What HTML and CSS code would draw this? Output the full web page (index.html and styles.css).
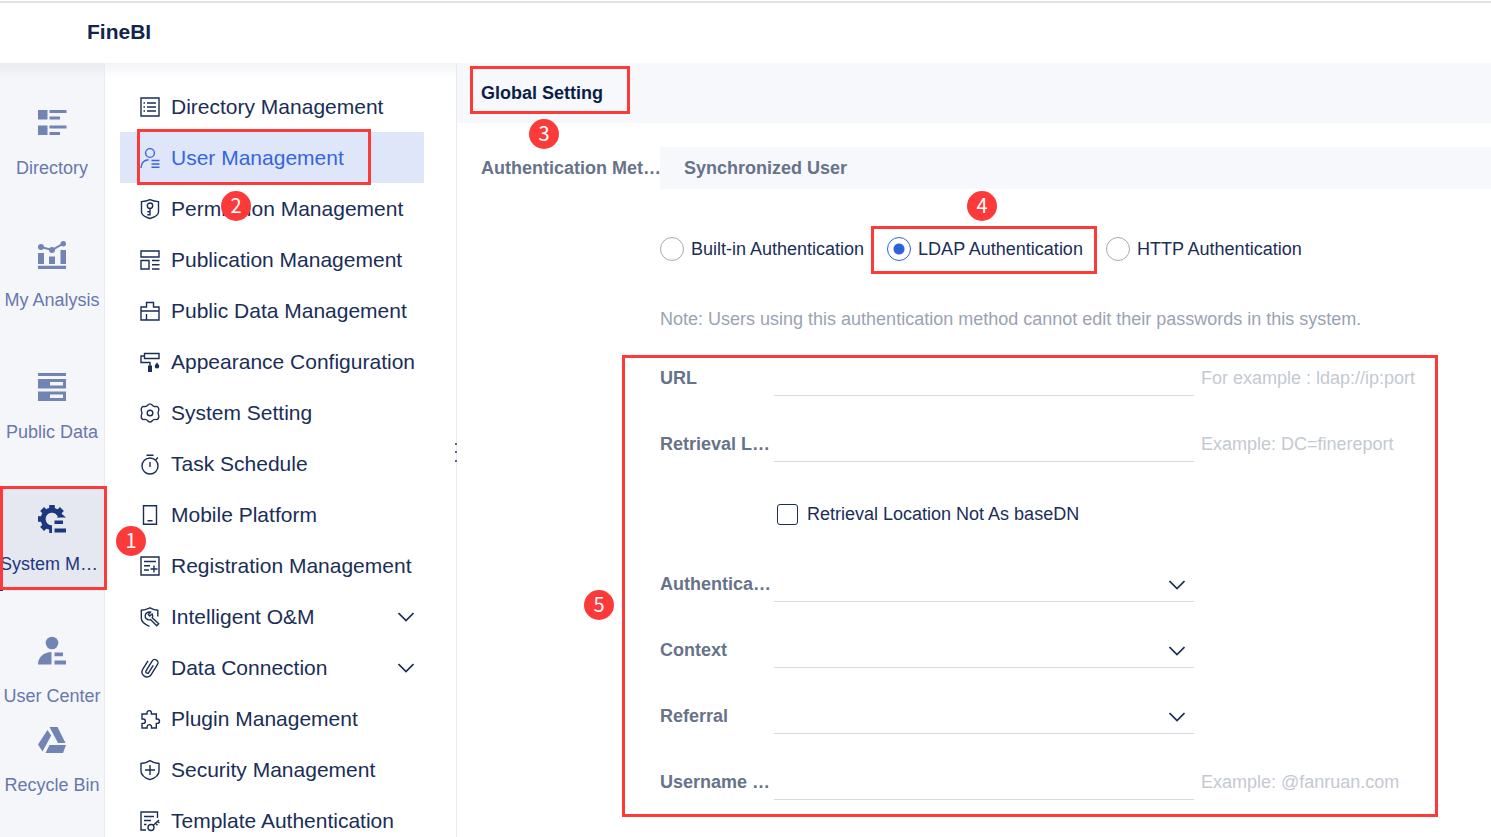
FILE: index.html
```html
<!DOCTYPE html>
<html lang="en">

<head>
    <meta charset="utf-8">
    <meta name="viewport" content="width=device-width, initial-scale=1">
    <title>FineBI</title>
    <link rel="stylesheet" href="styles.css">
</head>

<body>
    <header class="header">
        <h1 class="brand">FineBI</h1>
    </header>

    <div class="shell">
        <nav class="rail">
            <a class="rail-item" href="#">
                <svg class="rail-icon" viewBox="0 0 28 28">
                    <path d="M0 1h9.500v9.500H0zM11.500 1H28.500v3H11.500zM11.500 7.500H22v3H11.500zM0 16.500h9.500V26H0zM11.500 16.500H28.500v3H11.500zM11.500 23H22v3H11.500z" />
                </svg>
                <span class="rail-label">Directory</span>
            </a>
            <a class="rail-item" href="#">
                <svg class="rail-icon" viewBox="0 0 28 28">
                    <path d="M0 12h6v11H0zM11 15.500h6V23h-6zM22.500 9H28v14h-5.500zM0 24.700h28V28H0z" />
                    <circle cx="3" cy="6" r="3" />
                    <circle cx="14" cy="9" r="3" />
                    <circle cx="25.300" cy="2.700" r="2.700" />
                    <path class="stroke" d="M3 6l11 3 11.300-6.300" />
                </svg>
                <span class="rail-label">My Analysis</span>
            </a>
            <a class="rail-item" href="#">
                <svg class="rail-icon" viewBox="0 0 28 28">
                    <path fill-rule="evenodd" d="M0 0h28v3H0zM0 6h28v9.500H0zM12 9v3.500h13V9zM0 18.500h28V28H0zM12 21.500V25h13v-3.500z" />
                </svg>
                <span class="rail-label">Public Data</span>
            </a>
            <a class="rail-item active" href="#">
                <svg class="rail-icon" viewBox="0 0 28 28">
                    <path class="gear" d="M22.500 12A8.800 8.800 0 1 0 14 22.800" />
                    <rect x="11.200" y="0" width="5.600" height="6" />
                    <rect x="11.200" y="0" width="5.600" height="6" transform="rotate(45 14 14)" />
                    <rect x="11.200" y="0" width="5.600" height="6" transform="rotate(-45 14 14)" />
                    <rect x="11.200" y="0" width="5.600" height="6" transform="rotate(-90 14 14)" />
                    <rect x="11.200" y="0" width="5.600" height="6" transform="rotate(-135 14 14)" />
                    <path d="M11.200 22H14v6h-2.800zM18.500 12.500H28L24.500 9.500zM16.500 15.500H25V19h-8.500zM16.500 23.500H28v4H16.500z" />
                </svg>
                <span class="rail-label cut">System M…</span>
                <span class="ring ring-1"></span>
                <span class="badge badge-1">1</span>
            </a>
            <a class="rail-item" href="#">
                <svg class="rail-icon" viewBox="0 0 28 28">
                    <circle cx="14" cy="6" r="6.300" />
                    <path d="M0 27.500C0 20 6 15 13.500 15v12.500zM16.500 15.500H25v3.800h-8.500zM16.500 23.500H28v4H16.500z" />
                </svg>
                <span class="rail-label">User Center</span>
            </a>
            <a class="rail-item rail-bottom" href="#">
                <svg class="rail-icon" viewBox="0 0 28 28">
                    <path d="M11.500 1h8l8 16h-7.500zM9.500 4l3.700 5.500L4.500 25.500 0 18.500zM11.500 19H28l-3 8H7.500z" />
                </svg>
                <span class="rail-label">Recycle Bin</span>
            </a>
        </nav>

        <nav class="menu">
            <a class="menu-item" href="#">
                <svg class="icon" viewBox="0 0 20 20"><path d="M1 1h18v18H1zM3.500 6h1.500M7 6h9M3.500 10h1.500M7 10h9M3.500 14h1.500M7 14h9" /></svg>
                <span>Directory Management</span>
            </a>
            <a class="menu-item active" href="#">
                <svg class="icon" viewBox="0 0 20 20"><circle cx="10" cy="5" r="4.400" /><path d="M1 20c.3-4.500 3-8 7.500-8.300M11.500 12.500h8M11.500 16h8M11.500 19.300h8" /></svg>
                <span>User Management</span>
                <span class="ring ring-2"></span>
                <span class="badge badge-2">2</span>
            </a>
            <a class="menu-item" href="#">
                <svg class="icon" viewBox="0 0 20 20"><path d="M10 .7C7 2 4.500 2.500 1.500 2.600V13c0 3 3.500 5 8.500 6.500 5-1.500 8.500-3.500 8.500-6.500V2.600C15.500 2.500 13 2 10 .7zM10 9.500v7M10 12.700H7.300M10 15.700H7.300" /><circle cx="10" cy="6.700" r="2.700" /></svg>
                <span>Permission Management</span>
            </a>
            <a class="menu-item" href="#">
                <svg class="icon" viewBox="0 0 20 20"><path d="M1 1h18v6H1zM1 10.500h8V19H1zM12 10.500h7.500M12 14.700h7.500M12 19h7.500" /></svg>
                <span>Publication Management</span>
            </a>
            <a class="menu-item" href="#">
                <svg class="icon" viewBox="0 0 20 20"><path d="M1 19V6h5.500V1.500h7V6H19v13zM1 10h18M6.500 13v6" /></svg>
                <span>Public Data Management</span>
            </a>
            <a class="menu-item" href="#">
                <svg class="icon" viewBox="0 0 20 20"><path d="M4.500 1.500H19v5H4.500zM4.500 4H1v6.500h9V14" /><path class="solid" d="M8 13.500h4V20H8zM17 10.500c1.500 2 2.300 2.800 2.300 3.800a2.300 2.300 0 0 1-4.600 0c0-1 .8-1.800 2.300-3.800z" /></svg>
                <span>Appearance Configuration</span>
            </a>
            <a class="menu-item" href="#">
                <svg class="icon" viewBox="0 0 20 20"><path d="M7.700 2.200Q10-.5 12.300 2.200 13.600 4.100 16 3.400 18.900 3.500 18.800 7 17.200 10 18.800 13 18.900 16.500 16 16.600 13.600 15.900 12.300 17.800 10 20.500 7.700 17.800 6.400 15.900 4 16.600 1.100 16.500 1.200 13 2.800 10 1.200 7 1.100 3.500 4 3.400 6.400 4.100 7.700 2.200z" /><circle cx="10" cy="10" r="2.800" /></svg>
                <span>System Setting</span>
            </a>
            <a class="menu-item" href="#">
                <svg class="icon" viewBox="0 0 20 20"><circle cx="10" cy="12" r="8" /><path d="M6.500 1.300h7M15.500 6l2.500-2.500M10 8v5" /></svg>
                <span>Task Schedule</span>
            </a>
            <a class="menu-item" href="#">
                <svg class="icon" viewBox="0 0 20 20"><path d="M3.500.7h13v18.600h-13zM7.500 15.800h5" /></svg>
                <span>Mobile Platform</span>
            </a>
            <a class="menu-item" href="#">
                <svg class="icon" viewBox="0 0 20 20"><path d="M1 1h18v18H1zM4 5.500h12M4 9.700h6M4 14h5M10.500 13h7M14 9.500v7" /></svg>
                <span>Registration Management</span>
            </a>
            <a class="menu-item" href="#">
                <svg class="icon" viewBox="0 0 20 20"><path d="M17.800 9.500V3.300C15 3.200 12.500 2.200 10 .8 7 2.200 4 3.200 1.300 3.300V11c0 4 3.500 6.500 8.200 8.300" /><path d="M10.500 5.200L8.300 7.600l1.400 1.500L12.200 7c.8 1.500.6 2.800.1 3.800l6.400 6-2 2-6.200-6.200C7 13.600 4.800 11 5.200 8.300 5.600 6 8 4.500 10.500 5.200z" /></svg>
                <span>Intelligent O&amp;M</span>
                <svg class="chevron" viewBox="0 0 16 16"><path d="M.5 4L8 11.500 15.500 4" /></svg>
            </a>
            <a class="menu-item" href="#">
                <svg class="icon" viewBox="0 0 20 20"><path transform="rotate(32 10 10)" d="M4.500 5v10a5 5 0 0 0 10 0V3a3.200 3.200 0 0 0-6.400 0v11.500a1.600 1.600 0 0 0 3.200 0V6" /></svg>
                <span>Data Connection</span>
                <svg class="chevron" viewBox="0 0 16 16"><path d="M.5 4L8 11.500 15.500 4" /></svg>
            </a>
            <a class="menu-item" href="#">
                <svg class="icon" viewBox="0 0 20 20"><path d="M2 5h5V3.800a2.200 2.200 0 0 1 4.400 0V5h4.900v5h1a2.200 2.200 0 0 1 0 4.400h-1V19h-4.800v-1.200a2.200 2.200 0 0 0-4.400 0V19H2v-4.600h1.200a2.200 2.200 0 0 0 0-4.400H2z" /></svg>
                <span>Plugin Management</span>
            </a>
            <a class="menu-item" href="#">
                <svg class="icon" viewBox="0 0 20 20"><path d="M10 .6C7.500 2.200 4 3.300 1 3.500V11c0 4 4 7 9 8.600 5-1.600 9-4.600 9-8.600V3.500C16 3.300 12.500 2.200 10 .6zM5 10h10M10 5v10" /></svg>
                <span>Security Management</span>
            </a>
            <a class="menu-item" href="#">
                <svg class="icon" viewBox="0 0 20 20"><path d="M17.500 7V1H1v18h5M4 5.500h10M4 9.500h7M4 13.500h2.500M13 14.500l6-5.500M15.500 12.300l2 2M17.500 10.500l2 1.500" /><circle cx="11" cy="16.500" r="3" /></svg>
                <span>Template Authentication</span>
            </a>
            <svg class="grip" viewBox="0 0 3 20"><path d="M0 0h2v2H0zM0 8h2v2H0zM0 17h2v2H0z" /></svg>
        </nav>

        <main class="content">
            <div class="tabs">
                <a class="tab" href="#">Global Setting
                    <span class="ring ring-3"></span>
                    <span class="badge badge-3">3</span>
                </a>
            </div>

            <form class="settings">
                <div class="method">Authentication Met…</div>
                <div class="method-body">
                    <h2 class="method-title">Synchronized User</h2>

                    <div class="radios">
                        <label class="choice"><input class="radio" type="radio" name="auth">Built-in Authentication</label>
                        <label class="choice"><input class="radio" type="radio" name="auth" checked>LDAP Authentication
                            <span class="ring ring-4"></span>
                            <span class="badge badge-4">4</span>
                        </label>
                        <label class="choice"><input class="radio" type="radio" name="auth">HTTP Authentication</label>
                    </div>

                    <p class="note">Note: Users using this authentication method cannot edit their passwords in this system.</p>

                    <div class="fields">
                        <div class="field">
                            <label class="field-label" for="url">URL</label>
                            <input class="field-input" id="url" type="text">
                            <span class="hint">For example : ldap://ip:port</span>
                        </div>
                        <div class="field">
                            <label class="field-label" for="location">Retrieval L…</label>
                            <input class="field-input" id="location" type="text">
                            <span class="hint">Example: DC=finereport</span>
                        </div>
                        <label class="choice base-dn"><input class="checkbox" type="checkbox">Retrieval Location Not As baseDN</label>
                        <div class="field">
                            <label class="field-label" for="auth-type">Authentica…</label>
                            <span class="select-wrap">
                                <select class="field-input" id="auth-type"></select>
                                <svg class="chevron" viewBox="0 0 16 16"><path d="M.5 4L8 11.500 15.500 4" /></svg>
                            </span>
                        </div>
                        <div class="field">
                            <label class="field-label" for="context">Context</label>
                            <span class="select-wrap">
                                <select class="field-input" id="context"></select>
                                <svg class="chevron" viewBox="0 0 16 16"><path d="M.5 4L8 11.500 15.500 4" /></svg>
                            </span>
                        </div>
                        <div class="field">
                            <label class="field-label" for="referral">Referral</label>
                            <span class="select-wrap">
                                <select class="field-input" id="referral"></select>
                                <svg class="chevron" viewBox="0 0 16 16"><path d="M.5 4L8 11.500 15.500 4" /></svg>
                            </span>
                        </div>
                        <div class="field">
                            <label class="field-label" for="username">Username …</label>
                            <input class="field-input" id="username" type="text">
                            <span class="hint">Example: @fanruan.com</span>
                        </div>
                        <span class="ring ring-5"></span>
                        <span class="badge badge-5">5</span>
                    </div>
                </div>
            </form>
        </main>
    </div>
</body>

</html>
```

FILE: styles.css
```css
* {
    box-sizing: border-box;
}

body {
    margin: 0;
    height: 100vh;
    display: flex;
    flex-direction: column;
    overflow: hidden;
    background-color: #fff;
    color: #1a2e57;
    font-family: "Liberation Sans", Arial, sans-serif;
    font-size: 18px;
    line-height: 22px;
}

a {
    color: inherit;
    text-decoration: none;
}

/* Header */
.header {
    flex: none;
    height: 62px;
    margin-top: 1px;
    padding: 0 87px 2px;
    display: flex;
    align-items: center;
    border-top: 2px solid #e2e3e4;
}

.brand {
    margin: 0;
    font-size: 21px;
    line-height: 24px;
    color: #10264d;
}

.shell {
    flex: 1;
    display: flex;
    min-height: 0;
}

/* Left rail */
.rail {
    flex: none;
    width: 105px;
    padding-top: 28px;
    display: flex;
    flex-direction: column;
    gap: 28px;
    border-right: 1px solid #e9ebf1;
    background: linear-gradient(#e9ebf0, #f4f6fa 16px);
    color: #6878ad;
}

.rail-item {
    position: relative;
    flex: none;
    height: 104px;
    padding-top: 18px;
    display: flex;
    flex-direction: column;
    align-items: center;
    gap: 20px;
    white-space: nowrap;
}

.rail-item.active {
    background-color: #e5e8f1;
    box-shadow: inset 3px 0 #1d3680;
    color: #1d3680;
}

.rail-bottom {
    margin-top: -28px;
    padding-top: 3px;
}

.rail-icon {
    width: 28px;
    height: 28px;
    overflow: visible;
    fill: #7284b4;
}

.active .rail-icon {
    fill: #1d3680;
}

.rail-icon .stroke {
    fill: none;
    stroke: #7284b4;
    stroke-width: 2;
}

.rail-icon .gear {
    fill: none;
    stroke: #1d3680;
    stroke-width: 5;
}

.rail-label.cut {
    align-self: flex-start;
}

/* Second level menu */
.menu {
    position: relative;
    flex: none;
    width: 352px;
    padding: 18px 32px 0 15px;
    border-right: 1px solid #eaebef;
    background: linear-gradient(#f3f4f7, #fff 16px);
}

.menu-item {
    position: relative;
    height: 51px;
    padding: 0 10px 0 20px;
    display: flex;
    align-items: center;
    gap: 11px;
    font-size: 21px;
    line-height: 24px;
    white-space: nowrap;
}

.menu-item.active {
    background-color: #e0e6fa;
    color: #3565df;
}

.icon {
    flex: none;
    width: 20px;
    height: 20px;
    overflow: visible;
    fill: none;
    stroke: currentColor;
    stroke-width: 1.4;
}

.icon .solid {
    fill: currentColor;
    stroke: none;
}

.chevron {
    flex: none;
    width: 16px;
    height: 16px;
    margin-left: auto;
    fill: none;
    stroke: #1a2e57;
    stroke-width: 1.7;
}

.grip {
    position: absolute;
    top: 380px;
    right: -2px;
    width: 3px;
    height: 20px;
    fill: #5a6785;
}

/* Content */
.content {
    flex: 1;
    min-width: 0;
}

.tabs {
    height: 60px;
    padding: 0 24px;
    display: flex;
    align-items: center;
    background-color: #f7f8fc;
}

.tab {
    position: relative;
    font-weight: bold;
    color: #0b1f45;
}

.settings {
    padding: 24px 0 0 24px;
    display: flex;
}

.method {
    flex: none;
    width: 179px;
    line-height: 42px;
    font-weight: bold;
    color: #667389;
    white-space: nowrap;
}

.method-body {
    flex: 1;
    min-width: 0;
}

.method-title {
    margin: 0 0 48px;
    padding-left: 24px;
    background-color: #f7f8fc;
    font-size: 18px;
    line-height: 42px;
    color: #667389;
}

.radios {
    display: flex;
    gap: 23px;
}

.choice {
    position: relative;
    height: 24px;
    display: flex;
    align-items: center;
    gap: 7px;
    white-space: nowrap;
}

.radio {
    appearance: none;
    width: 24px;
    height: 24px;
    margin: 0;
    border: 1px solid #a3a9b7;
    border-radius: 50%;
}

.radio:checked {
    border-color: #2d62dc;
    background: radial-gradient(circle, #2d62dc 5px, transparent 6px);
}

.checkbox {
    appearance: none;
    width: 21px;
    height: 21px;
    margin: 0;
    border: 1px solid #1a2e57;
    border-radius: 3px;
}

.note {
    margin: 47px 0 30px;
    color: #9aa3b3;
}

.fields {
    position: relative;
    width: max-content;
    display: flex;
    flex-direction: column;
    gap: 30px;
}

.field {
    display: flex;
    height: 36px;
    line-height: 36px;
    white-space: nowrap;
}

.field-label {
    width: 114px;
    font-weight: bold;
    color: #667389;
}

.field-input {
    appearance: none;
    width: 420px;
    height: 36px;
    padding: 0 32px 0 4px;
    border: 0;
    border-bottom: 1px solid #d8dae1;
    border-radius: 0;
    outline: none;
    background: none;
    color: inherit;
    font: inherit;
}

.select-wrap {
    position: relative;
}

.select-wrap .chevron {
    position: absolute;
    top: 11px;
    right: 9px;
    pointer-events: none;
}

.hint {
    padding-left: 7px;
    color: #c4c9d2;
}

.base-dn {
    height: 44px;
    padding-left: 117px;
    gap: 9px;
}

/* Numbered step marks */
.ring {
    position: absolute;
    z-index: 2;
    border: 3px solid #fc3a3a;
    pointer-events: none;
}

.badge {
    position: absolute;
    z-index: 3;
    width: 30px;
    height: 30px;
    border-radius: 50%;
    background-color: #fc3a3a;
    color: #fff;
    font-family: "Noto Sans CJK SC", sans-serif;
    font-size: 20px;
    font-weight: normal;
    line-height: 28px;
    text-align: center;
}

.ring-1 {
    inset: -1px -3px 1px 0;
}

.badge-1 {
    top: 39px;
    left: 116px;
}

.ring-2 {
    inset: -3px 53px -2px 17px;
}

.badge-2 {
    top: 59px;
    left: 101px;
}

.ring-3 {
    inset: -16px -27px -10px -11px;
}

.badge-3 {
    top: 37px;
    left: 48px;
}

.ring-4 {
    inset: -11px -14px -13px -16px;
}

.badge-4 {
    top: -46px;
    left: 80px;
}

.ring-5 {
    inset: -5px -23px -17px -38px;
}

.badge-5 {
    top: 230px;
    left: -76px;
}
```
